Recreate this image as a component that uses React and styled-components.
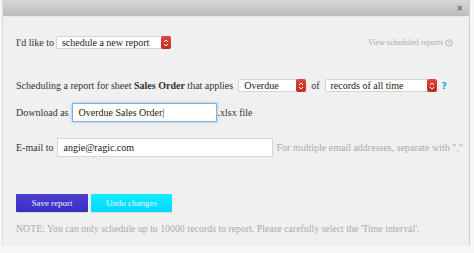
import React from "react";
import styled, { createGlobalStyle } from "styled-components";

const Global = createGlobalStyle`
  html, body {
    margin: 0;
    padding: 0;
    background: #f6f6f6;
  }
  body {
    font-family: "Liberation Serif", "DejaVu Serif", serif;
    font-size: 10px;
    color: #333;
  }
`;

const Dialog = styled.div`
  width: 468px;
  height: 246px;
  margin-left: 2px;
  background: #f0f0f0;
  border-left: 1px solid #dcdcdc;
  border-right: 1px solid #d0d0d0;
  box-sizing: border-box;
`;

const Header = styled.div`
  height: 16px;
  background: linear-gradient(#d6d6d6, #bdbdbd);
  border-bottom: 1px solid #e6e6e6;
  display: flex;
  justify-content: flex-end;
  align-items: center;
  padding-right: 6px;
`;

const Close = styled.span`
  font-family: "DejaVu Sans", sans-serif;
  font-size: 8px;
  color: #666;
  font-weight: bold;
`;

const Body = styled.div`
  padding: 16px 14px 0 13px;
`;

const Row = styled.div`
  display: flex;
  align-items: center;
  height: 19px;
  margin-bottom: ${(p) => p.mb || 0}px;
  gap: ${(p) => p.gap || 3}px;
  white-space: nowrap;
  & > * {
    flex-shrink: 0;
  }
`;

const Spacer = styled.div`
  flex: 1;
`;

const ViewLink = styled.span`
  color: #aaa;
  font-size: 8px;
  display: flex;
  align-items: center;
  gap: 2px;
  margin-right: 2px;
`;

const SelectBox = styled.div`
  width: ${(p) => p.w}px;
  height: 13px;
  box-sizing: border-box;
  background: #fff;
  border: 1px solid #d4d4d4;
  border-radius: 2px;
  display: flex;
  align-items: center;
  padding-left: 5px;
  justify-content: space-between;
  font-size: 10px;
  color: #222;
`;

const Arrow = styled.span`
  width: 10px;
  height: 13px;
  margin-right: -1px;
  background: linear-gradient(#e0483c, #c42a20);
  border-radius: 2px;
  display: flex;
  align-items: center;
  justify-content: center;
`;

const Input = styled.div`
  width: ${(p) => p.w}px;
  height: 19px;
  box-sizing: border-box;
  background: #fff;
  border: 1px solid ${(p) => (p.focus ? "#7fb0e0" : "#d4d4d4")};
  box-shadow: ${(p) => (p.focus ? "0 0 3px #8ec0f0" : "none")};
  display: flex;
  align-items: center;
  padding-left: 6px;
  font-size: 10px;
  color: #222;
`;

const Suffix = styled.span`
  margin-left: -2px;
`;

const Hint = styled.span`
  color: #aaa;
  margin-left: 1px;
`;

const Help = styled.span`
  color: #2a9fd6;
  font-family: "DejaVu Sans", sans-serif;
  font-weight: bold;
  font-size: 9px;
`;

const Buttons = styled.div`
  display: flex;
  gap: 3px;
  margin-top: 37px;
`;

const Button = styled.button`
  width: ${(p) => p.w}px;
  height: 18px;
  border: none;
  border-radius: 1px;
  color: #e8f4ff;
  font-family: inherit;
  font-size: 9px;
  padding: 0;
  background: ${(p) =>
    p.variant === "primary"
      ? "linear-gradient(#4a3fd0, #3a2fc0)"
      : "linear-gradient(#14ecff, #00d8ff)"};
  box-shadow: 0 1px 0 rgba(0, 0, 0, 0.1);
`;

const Note = styled.div`
  color: #aaa;
  font-size: 9.8px;
  margin-top: 11px;
  white-space: nowrap;
`;

const Chevron = () => (
  <svg width="6" height="8" viewBox="0 0 6 8">
    <path d="M1 3 L3 1 L5 3 M1 5 L3 7 L5 5" stroke="#fff" strokeWidth="1" fill="none" />
  </svg>
);

const Select = ({ w, children }) => (
  <SelectBox w={w}>
    {children}
    <Arrow>
      <Chevron />
    </Arrow>
  </SelectBox>
);

export default function App() {
  return (
    <>
      <Global />
      <Dialog>
        <Header>
          <Close>×</Close>
        </Header>
        <Body>
          <Row mb={24} gap={2}>
            <span>I'd like to</span>
            <Select w={115}>schedule a new report</Select>
            <Spacer />
            <ViewLink>
              View scheduled reports
              <svg width="8" height="8" viewBox="0 0 8 8">
                <circle cx="4" cy="4" r="3.3" stroke="#aaa" strokeWidth="0.8" fill="none" />
                <path d="M4 2 V4.3 L5.3 5" stroke="#aaa" strokeWidth="0.8" fill="none" />
              </svg>
            </ViewLink>
          </Row>
          <Row mb={8} gap={5}>
            <span>
              Scheduling a report for sheet <b>Sales Order</b> that applies
            </span>
            <Select w={68}>Overdue</Select>
            <span>of</span>
            <Select w={112}>records of all time</Select>
            <Help>?</Help>
          </Row>
          <Row mb={16}>
            <span>Download as</span>
            <Input w={145} focus>
              Overdue Sales Order|
            </Input>
            <Suffix>.xlsx file</Suffix>
          </Row>
          <Row>
            <span>E-mail to</span>
            <Input w={216}>angie@ragic.com</Input>
            <Hint>For multiple email addresses, separate with ","</Hint>
          </Row>
          <Buttons>
            <Button variant="primary" w={72}>Save report</Button>
            <Button w={81}>Undo changes</Button>
          </Buttons>
          <Note>
            NOTE: You can only schedule up to 10000 records to report. Please carefully select the 'Time interval'.
          </Note>
        </Body>
      </Dialog>
    </>
  );
}
